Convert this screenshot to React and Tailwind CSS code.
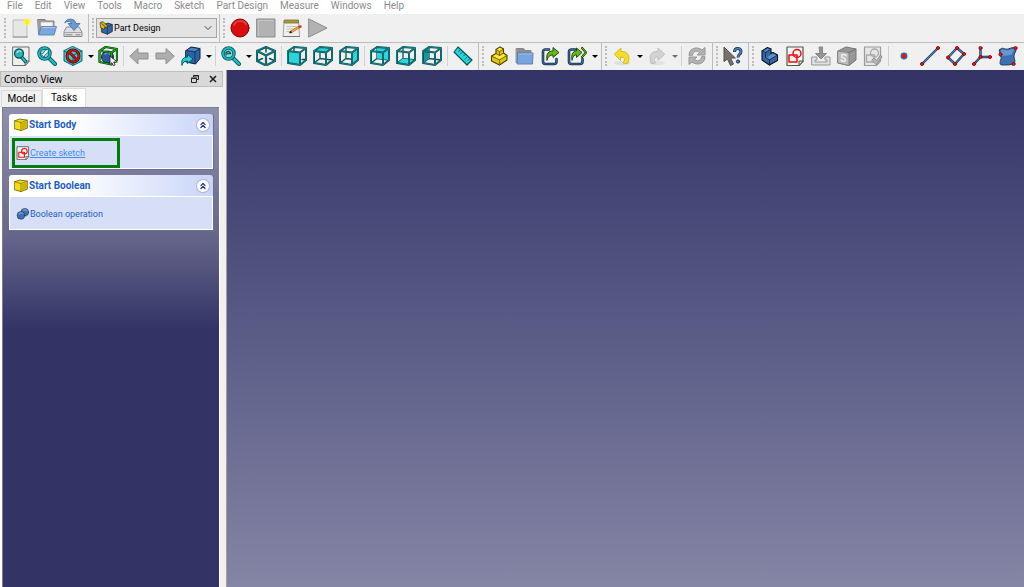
import { useState } from 'react';
import { ChevronDown, ChevronsUp } from 'lucide-react';

const MENUS = ['File', 'Edit', 'View', 'Tools', 'Macro', 'Sketch', 'Part Design', 'Measure', 'Windows', 'Help'];

const Svg = ({ children, className = 'w-5 h-5' }) => (
    <svg viewBox="0 0 20 20" className={`${className} shrink-0`} fill="none" strokeLinejoin="round" strokeLinecap="round" aria-hidden="true">
        {children}
    </svg>
);

// ---- File icons ----

const NewIcon = () => (
    <Svg>
        <path d="M2.500 2h13.500v17H2.500z" fill="#e6e6e6" stroke="#bdbdbd" />
        <path d="M2 19h14.500" stroke="#8f8f8f" />
        <circle cx="16" cy="4" r="4" fill="#fff45c" opacity=".6" />
        <circle cx="16" cy="4" r="2.200" fill="#fff200" />
    </Svg>
);

const OpenIcon = () => (
    <Svg>
        <path d="M1 1.500h7l1 1.500h8v13H2z" fill="#9b9b9b" stroke="#7d7d7d" />
        <path d="M4 4h12v6H4z" fill="#f5f5f5" stroke="#b0b0b0" strokeWidth=".7" />
        <path d="M4.500 8.500h15L17 17H2z" fill="#7ba7dc" stroke="#5c88c0" />
        <path d="M5.500 9.500h12.500" stroke="#abc9ee" />
    </Svg>
);

const SaveIcon = () => (
    <Svg>
        <path d="M4 9h12l3 5v4.500H1V14z" fill="#dedede" stroke="#8a8a8a" />
        <path d="M1.500 14.500h17" stroke="#a5a5a5" />
        <path d="M3 16.800h6M13 16.800h4" stroke="#858585" />
        <path d="M2 4.500c1-4.500 10-5 11 1h4l-6 7-6-7h3.500C8 3.500 5 2.500 2 4.500z" fill="#6b9ad2" stroke="#3f6da8" strokeWidth=".8" />
    </Svg>
);

const PartDesignIcon = () => (
    <Svg className="w-3.5 h-3.5">
        <path d="M4 6l9-3 6 2v10l-7 4-8-3z" fill="#3465a4" stroke="#0b1521" />
        <path d="M4 6l8 3v10M12 9l7-4" stroke="#17355c" />
        <path d="M2 2l4-1 6 6-1 3-3-1-1 3-4-2z" fill="#d6bb10" stroke="#302b00" />
        <path d="M4 4l5 4" stroke="#302b00" />
    </Svg>
);

// ---- Macro icons ----

const RecordIcon = () => (
    <Svg>
        <circle cx="10" cy="10" r="9" fill="#d90d0d" stroke="#7d0505" />
        <path d="M4 7c2-5 9-5 12-1" stroke="#e83a3a" strokeWidth="2" />
    </Svg>
);

const StopIcon = () => (
    <Svg>
        <path d="M1 1h18v18H1z" fill="#b2b2b2" stroke="#8b8b8b" />
        <path d="M2.500 17.500v-15h15" stroke="#c6c6c6" />
    </Svg>
);

const MacroIcon = () => (
    <Svg>
        <path d="M2.500 3h14l1 15.500h-16z" fill="#efefed" stroke="#a3a3a0" />
        <path d="M2.500 2h14v3h-14z" fill="#a79c3d" stroke="#766e2c" strokeWidth=".8" />
        <path d="M5 8.500h9M5 11h6M5 13.500h4" stroke="#c3c3c3" />
        <path d="M1.500 18.500h16" stroke="#777" />
        <path d="M9 14l8-5" stroke="#8f5902" strokeWidth="2.600" />
        <path d="M10 13.500l7-4.500" stroke="#f5a53b" strokeWidth="1.500" />
        <path d="M17.500 9l1-.6" stroke="#dc3030" strokeWidth="2.400" />
        <path d="M8 14.500l1-.5" stroke="#222" strokeWidth="1.500" />
    </Svg>
);

const PlayIcon = () => (
    <Svg>
        <path d="M1 1l18 9-18 9z" fill="#b2b2b2" stroke="#8b8b8b" />
    </Svg>
);

// ---- View icons ----

const Magnifier = () => (
    <>
        <path d="M11 11l7 7" stroke="#06595e" strokeWidth="4" />
        <path d="M11 11l7 7" stroke="#1cc5cb" strokeWidth="2.200" />
        <circle cx="7.500" cy="7.500" r="5.500" stroke="#06595e" strokeWidth="3.500" fill="#8fd5d7" />
        <circle cx="7.500" cy="7.500" r="5.500" stroke="#1cb5bb" strokeWidth="1.900" />
    </>
);

const FitAllIcon = () => (
    <Svg>
        <path d="M2 1h16v14l-4 4.500H2z" fill="#eeeeec" stroke="#6d6f6b" />
        <path d="M14 19.500V15h4z" fill="#d0d0cd" stroke="#6d6f6b" />
        <path d="M10.500 11l4 4.500" stroke="#06595e" strokeWidth="3.500" />
        <path d="M10.500 11l4 4.500" stroke="#1cc5cb" strokeWidth="1.800" />
        <circle cx="8" cy="7.500" r="4.500" fill="#2fb1b6" stroke="#06595e" strokeWidth="1.300" />
        <path d="M6 6.500c1-2 3-2 4-1" stroke="#a5e6e8" strokeWidth="1.300" />
    </Svg>
);

const FitSelectionIcon = () => (
    <Svg>
        <Magnifier />
        <path d="M3.500 8l4 3.500V9.500l3.500-3 .5-3-3 .5-2.500 3.500z" fill="#fff" stroke="#06595e" strokeWidth=".8" />
    </Svg>
);

const ZoomIcon = () => (
    <Svg>
        <Magnifier />
        <path d="M5 9V6.500C7 4.500 9.500 5.500 9.500 7.500H6.500" stroke="#06595e" strokeWidth="1.300" />
    </Svg>
);

const DrawStyleIcon = () => (
    <Svg>
        <path d="M10 .500l9 4.500v10l-9 4.500L1 15V5z" fill="#2dd0d5" stroke="#0a6b70" />
        <path d="M10 9.500L1 5M10 9.500L19 5M10 9.500v10" stroke="#0a6b70" />
        <circle cx="10" cy="10" r="6" stroke="#5c0000" strokeWidth="2.900" />
        <path d="M6 6l8 8" stroke="#5c0000" strokeWidth="2.900" />
        <circle cx="10" cy="10" r="6" stroke="#d51010" strokeWidth="1.700" />
        <path d="M6 6l8 8" stroke="#d51010" strokeWidth="1.700" />
    </Svg>
);

const BoundBoxIcon = () => (
    <Svg>
        <circle cx="9.500" cy="11" r="6" fill="#2c5a9a" stroke="#14294a" />
        <path d="M7 8c2-2 4-1 5 0" stroke="#729fcf" strokeWidth="1.500" />
        <path d="M1.500 5l12 1.500v12L1.500 16zM1.500 5l6-4L19 3l-5.500 3.500M19 3v11l-5.500 4.500" stroke="#093609" strokeWidth="2.200" />
        <path d="M1.500 5l12 1.500v12L1.500 16zM1.500 5l6-4L19 3l-5.500 3.500M19 3v11l-5.500 4.500" stroke="#18a818" strokeWidth="1.200" />
        <path d="M12 10.500v8l2-1.800 1.300 3 1.800-.8-1.300-2.900H19z" fill="#eee" stroke="#222" strokeWidth=".8" />
    </Svg>
);

const ArrowIcon = ({ flip }) => (
    <Svg>
        <path
            d={flip ? 'M19 10l-8-7.500V7H1v6h10v4.500z' : 'M1 10l8-7.500V7h10v6H9v4.500z'}
            fill="#adadad"
            stroke="#8f8f8f"
        />
    </Svg>
);

const LinkGroupIcon = () => (
    <Svg>
        <path d="M5 4.500L10 1l9 1.500v10L14.500 18 5 16z" fill="#2f62a5" stroke="#0b1e38" />
        <path d="M5 4.500l9 1.500v11M14 6l5-3.500" stroke="#16355f" />
        <path d="M6.500 4l4-2 6.500 1-3 2z" fill="#5585c0" />
        <path d="M1 19c-1-5 1-8 5.500-8V8.500L12 13l-5.500 4.500V15C3.500 15 2 16 1 19z" fill="#27cfd4" stroke="#06595e" />
    </Svg>
);

const IsoIcon = () => (
    <Svg>
        <path d="M10 1l9 4v10l-9 4.500L1 15V5zM1 5l9 4.500L19 5M10 9.500v10" stroke="#075458" strokeWidth="2.200" />
        <path d="M10 1v5M2 14.500l4.500-2M18 14.500l-4.500-2" stroke="#075458" strokeWidth="1.500" />
        <path d="M10 1l9 4v10l-9 4.500L1 15V5zM1 5l9 4.500L19 5M10 9.500v10" stroke="#1f9196" strokeWidth=".7" />
    </Svg>
);

const FACES = {
    front: 'M1 5l12 1.500V19L1 17z',
    top: 'M1 5l6-4 12 1-6 4.500z',
    right: 'M13 6.500L19 2v12l-6 5z',
    rear: 'M7 1l12 1v12L7 12.500z',
    bottom: 'M1 17l6-4.500L19 14l-6 5z',
    left: 'M1 5l6-4v11.500L1 17z',
};

const CubeIcon = ({ face }) => {
    const hidden = 'M7 1v11.500M7 12.500L1 17M7 12.500L19 14';
    const outer = 'M1 5l12 1.500V19L1 17zM1 5l6-4 12 1-6 4.500M19 2v12l-6 5';
    return (
        <Svg>
            {face !== 'front' && <path d={hidden} stroke="#075458" strokeWidth="1.300" />}
            <path d={FACES[face]} fill={face === 'left' ? '#15979c' : '#2ad6dc'} />
            {face === 'front' && <path d="M7 1v3.500M15 13.500h4" stroke="#075458" strokeWidth="1.300" />}
            <path d={outer} stroke="#075458" strokeWidth="2" />
            <path d={outer} stroke="#1f9196" strokeWidth=".7" />
        </Svg>
    );
};

const MeasureIcon = () => (
    <Svg>
        <path d="M5 1l14 13-5 5L1 6z" fill="#24d6dc" stroke="#075458" strokeWidth="1.200" />
        <path d="M7 4L5.500 5.500M9.500 6L7.500 8M12 8.500L10.500 10M14 11l-2 2M16.500 13L15 14.500" stroke="#075458" strokeWidth=".8" />
    </Svg>
);

// ---- Structure icons ----

const PartIcon = () => (
    <Svg>
        <path d="M2.500 10L7 7.500V3.500L11 1l3.500 2v4l3.500 2.500V14l-7.500 5-8-4z" fill="#e3c800" stroke="#4a4200" strokeWidth="1.100" />
        <path d="M2.500 10l8 4L18 9.500M10.500 14v5M7 3.500l3.500 2 4-2.500M10.500 5.500v4L7 7.500M10.500 9.500l4-2.500" stroke="#6d6100" strokeWidth=".9" />
        <path d="M8 3.500l3-1.700 2.300 1.300-2.800 1.700zM4.500 10L7 8.500l3.500 2 4-2.500 1.700 1.500-5.700 3.500z" fill="#fce94f" />
    </Svg>
);

const FolderIcon = () => (
    <Svg>
        <path d="M1.500 2.500h7l1.500 2H16v12H1.500z" fill="#8e8e8e" stroke="#858585" />
        <path d="M3 7h15l-.5 11H2.500z" fill="#7aa5dc" stroke="#5682ba" />
        <path d="M4 8h13" stroke="#9cc0ec" />
    </Svg>
);

const ExportIcon = ({ double }) => (
    <Svg>
        <path d="M8 3.500H4.500Q2 3.500 2 6v9.500Q2 18 4.500 18H13q2.500 0 2.500-2.500V13" stroke="#172f4f" strokeWidth="2.600" />
        <path d="M8 3.500H4.500Q2 3.500 2 6v9.500Q2 18 4.500 18H13q2.500 0 2.500-2.500V13" stroke="#3e6799" strokeWidth="1.100" />
        {double && <path d="M15 2l4 4.500-4 4.500" stroke="#173b02" strokeWidth="2.200" />}
        {double && <path d="M15 2l4 4.500-4 4.500" stroke="#73d216" strokeWidth="1" />}
        <path
            d={double ? 'M5 14C4 8 6 5 9.500 5V2l5.500 4.500-5.500 5V9C7 9 6 10.500 5 14z' : 'M6 14C5 8 7 5 12 5V1.500l6 5-6 5V9c-3 0-5 1.500-6 5z'}
            fill="#63b91a"
            stroke="#173b02"
            strokeWidth=".9"
        />
    </Svg>
);

// ---- Edit icons ----

const UndoIcon = () => (
    <Svg>
        <ellipse cx="10" cy="17" rx="8" ry="2" fill="#dedede" />
        <path d="M2.500 8L9 2v3.500c7-.5 9.500 4.500 7 11.500-1 .8-3 .8-5 0 2.500-4 2-6-2.500-6v3z" fill="#f2dc2e" stroke="#d8bd22" />
    </Svg>
);

const RedoIcon = () => (
    <Svg>
        <ellipse cx="10" cy="17" rx="8" ry="2" fill="#e2e2e2" />
        <path d="M17.500 8L11 2v3.500C4 5 1.500 10 4 17c1 .8 3 .5 4.500 0-2-4-1-6 2.500-6v3z" fill="#d2d2d2" stroke="#bdbdbd" />
    </Svg>
);

const RefreshIcon = () => (
    <Svg>
        <path d="M2 9C2 2 10 0 15 4l3-2.500V9h-8l2.500-2.500C10 4.500 6 5 5.500 9z" fill="#b3b3b3" stroke="#979797" />
        <path d="M18 11c0 7-8 9-13 5l-3 2.500V11h8l-2.500 2.500C10 15.500 14 15 14.500 11z" fill="#b3b3b3" stroke="#979797" />
    </Svg>
);

const WhatsThisIcon = () => (
    <Svg>
        <path d="M1 1.500v14l3.500-2.500 3 6.500 3-1.500L7.500 12H12z" fill="#73736e" stroke="#4f4f4c" />
        <path d="M11.500 6C11.500 1 18 1.500 18 5.500c0 3-3 2.500-3 6" stroke="#18304f" strokeWidth="3" strokeLinecap="butt" />
        <path d="M11.500 5.500C12 1.500 18 1.500 18 5.500c0 3-3 2.500-3 5.500" stroke="#4c7fbd" strokeWidth="1.600" strokeLinecap="butt" />
        <circle cx="15" cy="15.500" r="1.600" fill="#4c7fbd" stroke="#18304f" />
    </Svg>
);

// ---- Part design icons ----

// L-shaped block: low step in front on the right, tall step behind on the left
const BodyIcon = () => (
    <Svg>
        <path d="M3 5l5.500-3.500L12 3v4.500L14 6.500 18.500 9v5.500L10.500 19 3 14z" fill="#3465a4" stroke="#0b1521" strokeWidth="1.100" />
        <path d="M6.500 6.500v5l4 2.500v5M3 5l3.500 1.500L12 3" stroke="#122b4c" strokeWidth=".9" />
        <path d="M10.500 14l8-5" stroke="#122b4c" strokeWidth=".9" />
        <path d="M4.500 5l4-2.500 2 .8-4 2.500zM7.500 11.500l6.500-4 3.300 1.800-6.800 4z" fill="#5d8fca" />
    </Svg>
);

const SketchIcon = ({ className }) => (
    <Svg className={className}>
        <path d="M2 1h16v14l-4 4.500H2z" fill="#f6f6f5" stroke="#555753" strokeWidth="1.200" />
        <path d="M14 19.500V15h4z" fill="#d0d0cd" stroke="#555753" />
        <path d="M4 9h8v7H4z" stroke="#f00a0a" strokeWidth="1.500" />
        <circle cx="12" cy="7.500" r="4" stroke="#f00a0a" strokeWidth="1.500" />
    </Svg>
);

const MapIcon = () => (
    <Svg>
        <path d="M1 11h5v3H4v2h12v-2h-2v-3h5v8H1z" fill="#e2e2e2" stroke="#979797" />
        <path d="M8.500 1h3v6.500h4L10 13 4.500 7.500h4z" fill="#969696" stroke="#848484" />
    </Svg>
);

const SketchEditIcon = () => (
    <Svg>
        <path d="M1 5l8-4 10 2v11l-7 5.500L1 17z" fill="#979797" stroke="#757575" />
        <path d="M1 5l11 1.500v13L1 17z" fill="#bdbdbd" stroke="#858585" />
        <path d="M12 6.500L19 3" stroke="#6f6f6f" />
        <path d="M9 9.500c-2-2-5-1-4.500 1 .5 1.500 4 1.500 4 3.500 0 1.500-3 2-4.500 0" stroke="#f3f3f3" strokeWidth="1.400" />
    </Svg>
);

const ValidateIcon = () => (
    <Svg>
        <path d="M1.500 1h16v14l-4 4.500h-12z" fill="#e6e6e6" stroke="#9a9a9a" strokeWidth="1.200" />
        <path d="M3.500 9h8v7h-8z" stroke="#a8a8a8" strokeWidth="1.300" />
        <circle cx="11.500" cy="7" r="4" stroke="#a8a8a8" strokeWidth="1.300" />
        <path d="M9 14l2-2 2.500 2.500L17.500 9l1.500 2-5.500 7.500z" fill="#b5b5b5" stroke="#8f8f8f" />
    </Svg>
);

const Dots = ({ points }) => points.map(([x, y]) => (
    <circle key={`${x}-${y}`} cx={x} cy={y} r="1.600" fill="#f01414" stroke="#8c0000" strokeWidth=".8" />
));

const PointIcon = () => (
    <Svg>
        <circle cx="10" cy="10" r="2.800" fill="#e81515" stroke="#3465a4" strokeWidth="1.300" />
    </Svg>
);

const LineIcon = () => (
    <Svg>
        <path d="M2 18L18 2" stroke="#172f4f" strokeWidth="2.400" />
        <path d="M2 18L18 2" stroke="#4d7fb9" strokeWidth="1.100" />
        <Dots points={[[2, 18], [18, 2]]} />
    </Svg>
);

const PlaneIcon = () => (
    <Svg>
        <path d="M11 2l7 6-9 10-7-6.500z" stroke="#172f4f" strokeWidth="2.400" />
        <path d="M11 2l7 6-9 10-7-6.500z" stroke="#4d7fb9" strokeWidth="1.100" />
        <Dots points={[[11, 2], [18, 8], [9, 18], [2, 11.5]]} />
    </Svg>
);

const CoordinateIcon = () => (
    <Svg>
        <path d="M8.500 2v9l-6.500 7M8.500 11H18" stroke="#172f4f" strokeWidth="2.400" />
        <path d="M8.500 2v9l-6.500 7M8.500 11H18" stroke="#4d7fb9" strokeWidth="1.100" />
        <Dots points={[[8.5, 2], [8.5, 11], [2, 18], [18, 11]]} />
    </Svg>
);

const BinderIcon = () => (
    <Svg>
        <path d="M1.500 4C4 0 7 4 10 3s5-2 8-1c1 3-2 5-2 8s2 5 0 8c-4 1-8 1-12 1-3 0-2-4-1-6S1 8 1.500 4z" fill="#3d71b2" stroke="#173860" strokeWidth=".9" />
        <path d="M3 4c3-1 5 1 8 0s4-1 5-1c0 2-2 3-2 5-3 2-7 1-10 2z" fill="#6897d0" />
        <Dots points={[[17.5, 2], [2.5, 8.5], [15.5, 18]]} />
    </Svg>
);

// ---- Task panel icons ----

const YellowBoxIcon = () => (
    <Svg className="w-3.5 h-3.5">
        <path d="M1 4l7-2.500 11 1.500v11.500L10 18l-9-2.500z" fill="#f3dc13" stroke="#6b5f00" strokeWidth="1.200" />
        <path d="M1 4l9 2.500V18M10 6.500L19 3" stroke="#8a7b00" strokeWidth="1.200" />
        <path d="M11 7.500l7-3v9l-7 3z" fill="#c9b300" />
    </Svg>
);

const BooleanIcon = () => (
    <Svg className="w-3.5 h-3.5">
        <circle cx="12.500" cy="7.500" r="5.500" fill="#3f6fab" stroke="#1a365d" strokeWidth=".8" />
        <circle cx="7" cy="12" r="5.500" fill="#3f6fab" stroke="#1a365d" strokeWidth=".8" />
        <path d="M4.500 10c1-2 4-2 5-1M11 4.500c2-1 4 0 4 1" stroke="#7aa3d4" strokeWidth="2" />
    </Svg>
);

const RestoreIcon = () => (
    <svg viewBox="0 0 8 8" className="w-2 h-2" fill="none" stroke="#222" aria-hidden="true">
        <path d="M2.500 2V.500h5v4H6M.500 3.500h5v4h-5zM0 3h6M2 1h6" />
    </svg>
);

const CloseIcon = () => (
    <svg viewBox="0 0 8 8" className="w-2 h-2" fill="none" stroke="#222" strokeWidth="1.600" aria-hidden="true">
        <path d="M1 1l6 6M7 1L1 7" />
    </svg>
);

// ---- Toolbar parts ----

const Handle = () => (
    <div className="flex shrink-0 justify-center w-[7px] h-full py-1">
        <span className="border-l-2 border-dotted border-[#bdbdbd]" />
    </div>
);

const Toolbar = ({ label, last, children }) => (
    <div
        role="toolbar"
        aria-label={label}
        className={last ? 'flex shrink-0 items-center h-full' : 'flex shrink-0 items-center h-full pr-[2px] border-r border-[#bcbcbc]'}
    >
        <Handle />
        {children}
    </div>
);

const ToolButton = ({ label, children }) => (
    <button type="button" title={label} aria-label={label} className="flex shrink-0 items-center justify-center w-[26px] h-6 hover:bg-[#dcebf8]">
        {children}
    </button>
);

const Caret = ({ label, dim }) => (
    <button type="button" aria-label={label} className="flex shrink-0 items-center justify-center w-[9px] h-6">
        <svg viewBox="0 0 6 3" className={dim ? 'w-[6px] h-[3px] text-[#6c6c6c]' : 'w-[6px] h-[3px] text-black'} aria-hidden="true">
            <path d="M0 0h6L3 3z" fill="currentColor" />
        </svg>
    </button>
);

const Separator = () => (
    <div className="flex shrink-0 justify-center w-[5px] h-5">
        <span className="border-l border-[#d0d0d0]" />
    </div>
);

const TaskBox = ({ title, children }) => {
    const [open, setOpen] = useState(true);
    return (
        <section className="shadow-[1px_1px_0_#6d6d92]">
            <div className="flex items-center h-[21px] pl-[5px] pr-1 rounded-t-[3px] bg-linear-to-r from-white from-30% to-[#c8d5f8]">
                <YellowBoxIcon />
                <h2 className="flex-1 pl-px font-bold text-[#215dc6]">{title}</h2>
                <button
                    type="button"
                    aria-label={`Toggle ${title}`}
                    aria-expanded={open}
                    onClick={() => setOpen(!open)}
                    className="flex items-center justify-center w-3 h-3 rounded-full bg-white ring-1 ring-[#b0b7d6] text-[#1b2f8c]"
                >
                    <ChevronsUp size={10} strokeWidth={3} />
                </button>
            </div>
            {open && <div className="p-[2px] h-[34px] border border-white bg-[#d6dff7] text-[9px]">{children}</div>}
        </section>
    );
};

const App = () => {
    const [tab, setTab] = useState('Tasks');

    return (
        <div className="flex flex-col min-h-screen overflow-x-hidden bg-[#f0f0f0] font-['Roboto','Noto_Sans',sans-serif] text-[10px] leading-[12px] text-black">
            <nav className="flex items-start h-[14px] pl-[7px] gap-3 bg-white text-[#8c8c8c]">
                {MENUS.map(menu => (
                    <button key={menu} type="button" className="shrink-0 whitespace-nowrap">{menu}</button>
                ))}
            </nav>

            <div className="flex items-center h-7 pl-px shadow-[0_1px_0_#bcbcbc]">
                <Toolbar label="File">
                    <ToolButton label="New"><NewIcon /></ToolButton>
                    <ToolButton label="Open"><OpenIcon /></ToolButton>
                    <ToolButton label="Save"><SaveIcon /></ToolButton>
                </Toolbar>
                <Toolbar label="Workbench">
                    <div className="flex items-center gap-px w-[121px] h-5 px-[2px] border border-[#a5a5a5] bg-[#e3e3e3]">
                        <PartDesignIcon />
                        <select aria-label="Workbench" defaultValue="Part Design" className="flex-1 min-w-0 appearance-none bg-transparent text-[9px] outline-none">
                            <option>Part Design</option>
                            <option>Sketcher</option>
                        </select>
                        <ChevronDown size={12} className="shrink-0 text-[#444]" />
                    </div>
                </Toolbar>
                <Toolbar label="Macro" last>
                    <ToolButton label="Record macro"><RecordIcon /></ToolButton>
                    <ToolButton label="Stop recording"><StopIcon /></ToolButton>
                    <ToolButton label="Macros"><MacroIcon /></ToolButton>
                    <ToolButton label="Execute macro"><PlayIcon /></ToolButton>
                </Toolbar>
            </div>

            <div className="flex items-center h-7 pl-px">
                <Toolbar label="View">
                    <ToolButton label="Fit all"><FitAllIcon /></ToolButton>
                    <ToolButton label="Fit selection"><FitSelectionIcon /></ToolButton>
                    <ToolButton label="Draw style"><DrawStyleIcon /></ToolButton>
                    <Caret label="Draw style options" />
                    <ToolButton label="Bounding box"><BoundBoxIcon /></ToolButton>
                    <Separator />
                    <ToolButton label="Back"><ArrowIcon /></ToolButton>
                    <ToolButton label="Forward"><ArrowIcon flip /></ToolButton>
                    <ToolButton label="Go to linked object"><LinkGroupIcon /></ToolButton>
                    <Caret label="Link options" />
                    <Separator />
                    <ToolButton label="Zoom"><ZoomIcon /></ToolButton>
                    <Caret label="Zoom options" />
                    <ToolButton label="Isometric"><IsoIcon /></ToolButton>
                    <Separator />
                    <ToolButton label="Front"><CubeIcon face="front" /></ToolButton>
                    <ToolButton label="Top"><CubeIcon face="top" /></ToolButton>
                    <ToolButton label="Right"><CubeIcon face="right" /></ToolButton>
                    <Separator />
                    <ToolButton label="Rear"><CubeIcon face="rear" /></ToolButton>
                    <ToolButton label="Bottom"><CubeIcon face="bottom" /></ToolButton>
                    <ToolButton label="Left"><CubeIcon face="left" /></ToolButton>
                    <Separator />
                    <ToolButton label="Measure distance"><MeasureIcon /></ToolButton>
                </Toolbar>
                <Toolbar label="Structure">
                    <ToolButton label="Create part"><PartIcon /></ToolButton>
                    <ToolButton label="Create group"><FolderIcon /></ToolButton>
                    <ToolButton label="Make link"><ExportIcon /></ToolButton>
                    <ToolButton label="Link actions"><ExportIcon double /></ToolButton>
                    <Caret label="Link action options" />
                </Toolbar>
                <Toolbar label="Edit">
                    <ToolButton label="Undo"><UndoIcon /></ToolButton>
                    <Caret label="Undo history" />
                    <ToolButton label="Redo"><RedoIcon /></ToolButton>
                    <Caret label="Redo history" dim />
                    <Separator />
                    <ToolButton label="Refresh"><RefreshIcon /></ToolButton>
                </Toolbar>
                <Toolbar label="Help">
                    <ToolButton label="What's this?"><WhatsThisIcon /></ToolButton>
                </Toolbar>
                <Toolbar label="Part Design" last>
                    <ToolButton label="Create body"><BodyIcon /></ToolButton>
                    <ToolButton label="New sketch"><SketchIcon /></ToolButton>
                    <ToolButton label="Map sketch"><MapIcon /></ToolButton>
                    <ToolButton label="Edit sketch"><SketchEditIcon /></ToolButton>
                    <ToolButton label="Validate sketch"><ValidateIcon /></ToolButton>
                    <Separator />
                    <ToolButton label="Datum point"><PointIcon /></ToolButton>
                    <ToolButton label="Datum line"><LineIcon /></ToolButton>
                    <ToolButton label="Datum plane"><PlaneIcon /></ToolButton>
                    <ToolButton label="Local coordinate system"><CoordinateIcon /></ToolButton>
                    <ToolButton label="Shape binder"><BinderIcon /></ToolButton>
                </Toolbar>
            </div>

            <div className="flex flex-1">
                <aside className="flex flex-col shrink-0 w-[227px] pr-[3px] border-r border-[#a0a0a0]">
                    <div className="flex items-center h-4 mt-px pl-[3px] pr-[3px] border border-[#bdbdbd] bg-[#d9d9d9]">
                        <h1 className="flex-1 font-['Noto_Sans',sans-serif]">Combo View</h1>
                        <button type="button" aria-label="Float" className="flex items-center justify-center w-4 h-3"><RestoreIcon /></button>
                        <button type="button" aria-label="Close" className="flex items-center justify-center w-3 h-3 ml-1"><CloseIcon /></button>
                    </div>
                    <div role="tablist" className="flex items-end h-5 pl-px">
                        {['Model', 'Tasks'].map(name => (
                            <button
                                key={name}
                                type="button"
                                role="tab"
                                aria-selected={tab === name}
                                onClick={() => setTab(name)}
                                className={tab === name
                                    ? 'w-11 h-[19px] border border-b-0 border-[#dcdcdc] bg-white'
                                    : 'w-[41px] h-[17px] border border-b-0 border-[#dcdcdc] bg-[#f0f0f0]'}
                            >
                                {name}
                            </button>
                        ))}
                    </div>
                    <div className="flex flex-col flex-1 mr-[3px] pl-[2px] pr-px bg-white">
                        <div className="flex flex-col flex-1 gap-[6px] p-[6px] border-l border-t border-[#7d7d8c] bg-[#333366] bg-[linear-gradient(#8f8fae_0px,#68688c_124px,#333366_222px)]">
                            <TaskBox title="Start Body">
                                <div className="flex items-center w-[108px] h-[30px] pl-px border-[3px] border-[#007d0a]">
                                    <SketchIcon className="w-3.5 h-3.5" />
                                    <a href="#sketch" className="text-[#3f8cf3] underline">Create sketch</a>
                                </div>
                            </TaskBox>
                            <TaskBox title="Start Boolean">
                                <div className="flex items-center h-[30px] pl-1">
                                    <BooleanIcon />
                                    <a href="#boolean" className="text-[#215dc6]">Boolean operation</a>
                                </div>
                            </TaskBox>
                        </div>
                    </div>
                </aside>
                <main aria-label="3D view" className="flex-1 bg-linear-to-b from-[#333366] to-[#8585a5]" />
            </div>
        </div>
    );
};

export default App;
